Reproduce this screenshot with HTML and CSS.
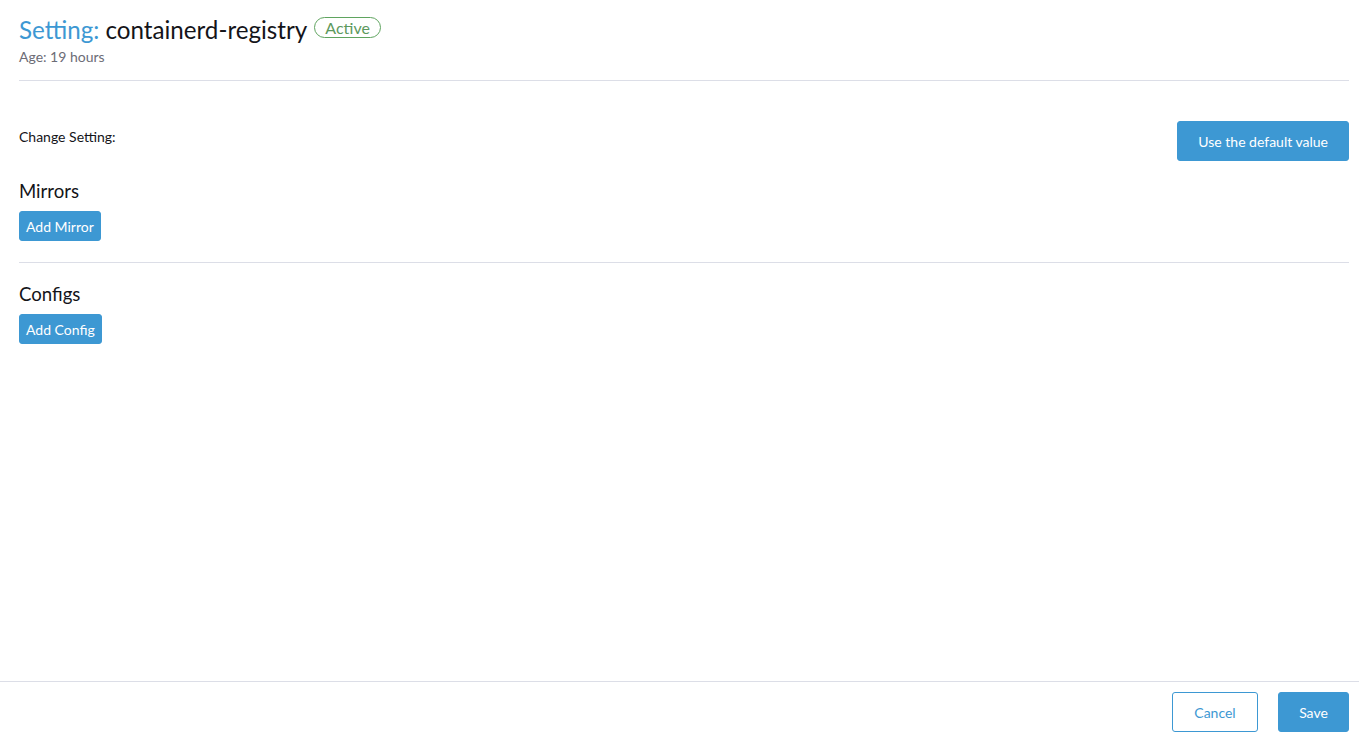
FILE: index.html
```html
<!DOCTYPE html>
<html>
<head>
<meta charset="utf-8">
<link rel="stylesheet" href="styles.css">
</head>
<body>
<div class="page">
  <main class="content">
    <header class="masthead">
      <h1 class="title"><span class="title-type">Setting:</span> containerd-registry <span class="badge">Active</span></h1>
      <div class="subtitle">Age: 19 hours</div>
    </header>
    <div class="change-row">
      <div class="change-label">Change Setting:</div>
      <button class="btn btn-primary btn-lg">Use the default value</button>
    </div>
    <section class="group">
      <h3 class="group-title">Mirrors</h3>
      <button class="btn btn-primary btn-sm">Add Mirror</button>
    </section>
    <section class="group group-bordered">
      <h3 class="group-title">Configs</h3>
      <button class="btn btn-primary btn-sm">Add Config</button>
    </section>
  </main>
  <footer class="footer">
    <button class="btn btn-outline btn-lg cancel">Cancel</button>
    <button class="btn btn-primary btn-lg save">Save</button>
  </footer>
</div>
</body>
</html>
```
FILE: styles.css
```css
html, body {
  margin: 0;
  padding: 0;
  height: 100%;
  background: #fff;
  font-family: Lato, "Liberation Sans", sans-serif;
  color: #141419;
}
.page {
  height: 736px;
  display: flex;
  flex-direction: column;
}
.content {
  flex: 1;
  padding: 0 10px 0 19px;
}
.masthead {
  padding-top: 15px;
  padding-bottom: 15px;
  border-bottom: 1px solid #dcdee7;
}
.title {
  margin: 0;
  font-size: 24.2px;
  font-weight: 400;
  line-height: 30px;
  display: flex;
  align-items: flex-start;
}
.title-type {
  color: #3d98d3;
  margin-right: 6px;
}
.badge {
  display: inline-flex;
  align-items: center;
  height: 19px;
  margin-top: 2px;
  padding: 0 10px;
  margin-left: 7px;
  border: 1px solid #5fa45f;
  border-radius: 11px;
  color: #5d995d;
  font-size: 16px;
  line-height: 19px;
}
.subtitle {
  margin-top: 3px;
  font-size: 14px;
  color: #6c6c76;
  line-height: 17px;
}
.change-row {
  display: flex;
  justify-content: space-between;
  align-items: flex-start;
  margin-top: 40px;
}
.change-label {
  font-size: 14px;
  line-height: 17px;
  margin-top: 7px;
}
.btn {
  font-family: Lato, "Liberation Sans", sans-serif;
  border-radius: 3px;
  cursor: pointer;
}
.btn-primary {
  background: #3d98d3;
  color: #fff;
  border: 1px solid #3d98d3;
}
.btn-outline {
  background: #fff;
  color: #3d98d3;
  border: 1px solid #3d98d3;
}
.btn-lg {
  height: 40px;
  padding: 0 20px;
  font-size: 14px;
}
.btn-sm {
  height: 30px;
  padding: 0 6px;
  font-size: 14px;
}
.group {
  margin-top: 19px;
  padding-bottom: 21px;
}
.group-title {
  margin: 0 0 9px;
  font-size: 18.6px;
  font-weight: 400;
  line-height: 22px;
}
.group-bordered {
  margin-top: 0;
  border-top: 1px solid #dcdee7;
  padding-top: 20px;
}
.footer {
  border-top: 1px solid #dcdee7;
  display: flex;
  justify-content: flex-end;
  gap: 20px;
  padding: 10px 10px 4px;
}
.cancel {
  width: 86px;
}
.save {
  width: 71px;
}
```
